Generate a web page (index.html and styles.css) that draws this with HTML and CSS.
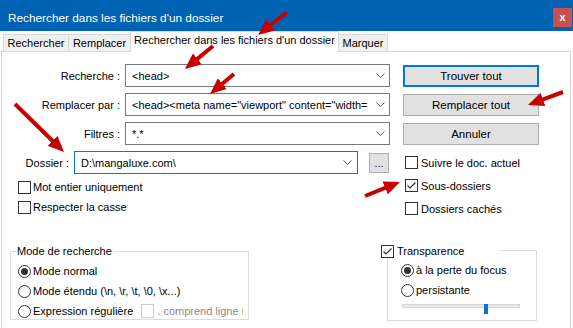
FILE: index.html
```html
<!DOCTYPE html>
<html lang="fr">
<head>
    <meta charset="UTF-8">
    <meta name="viewport" content="width=device-width, initial-scale=1.0">
    <title>Rechercher dans les fichiers d'un dossier</title>
    <link rel="stylesheet" href="styles.css">
</head>
<body>
    <div class="window">
        <div class="titlebar">
            <span class="title">Rechercher dans les fichiers d'un dossier</span>
            <span class="close">x</span>
        </div>

        <div class="tabs">
            <div class="tab tab-find">Rechercher</div>
            <div class="tab tab-replace">Remplacer</div>
            <div class="tab tab-files active">Rechercher dans les fichiers d'un dossier</div>
            <div class="tab tab-mark">Marquer</div>
        </div>

        <div class="panel">
            <div class="top">
                <div class="fields">
                    <div class="field">
                        <label>Recherche :</label>
                        <div class="combo">
                            <span class="value">&lt;head&gt;</span>
                            <svg class="chevron" width="9" height="5" viewBox="0 0 9 5"><polyline points="0.5,0.5 4.5,4.5 8.5,0.5" /></svg>
                        </div>
                    </div>
                    <div class="field">
                        <label>Remplacer par :</label>
                        <div class="combo">
                            <span class="value">&lt;head&gt;&lt;meta name="viewport" content="width=</span>
                            <svg class="chevron" width="9" height="5" viewBox="0 0 9 5"><polyline points="0.5,0.5 4.5,4.5 8.5,0.5" /></svg>
                        </div>
                    </div>
                    <div class="field">
                        <label>Filtres :</label>
                        <div class="combo">
                            <span class="value">*.*</span>
                            <svg class="chevron" width="9" height="5" viewBox="0 0 9 5"><polyline points="0.5,0.5 4.5,4.5 8.5,0.5" /></svg>
                        </div>
                    </div>
                    <div class="field field-folder">
                        <label>Dossier :</label>
                        <div class="combo focus">
                            <span class="value">D:\mangaluxe.com\</span>
                            <svg class="chevron" width="9" height="5" viewBox="0 0 9 5"><polyline points="0.5,0.5 4.5,4.5 8.5,0.5" /></svg>
                        </div>
                        <button class="browse">...</button>
                    </div>

                    <div class="checks left-checks">
                        <div class="check-row"><span class="box"></span><span>Mot entier uniquement</span></div>
                        <div class="check-row"><span class="box"></span><span>Respecter la casse</span></div>
                    </div>
                </div>

                <div class="actions">
                    <button class="btn default">Trouver tout</button>
                    <button class="btn">Remplacer tout</button>
                    <button class="btn">Annuler</button>

                    <div class="checks right-checks">
                        <div class="check-row"><span class="box"></span><span>Suivre le doc. actuel</span></div>
                        <div class="check-row">
                            <span class="box checked"><svg width="11" height="11" viewBox="0 0 11 11"><polyline points="1.5,5.5 4,8 9.5,2.5" /></svg></span>
                            <span>Sous-dossiers</span>
                        </div>
                        <div class="check-row"><span class="box"></span><span>Dossiers cachés</span></div>
                    </div>
                </div>
            </div>

            <div class="bottom">
                <div class="group group-mode">
                    <div class="group-title">Mode de recherche</div>
                    <div class="radio-row"><span class="radio on"></span><span>Mode normal</span></div>
                    <div class="radio-row"><span class="radio"></span><span>Mode étendu (\n, \r, \t, \0, \x...)</span></div>
                    <div class="radio-row">
                        <span class="radio"></span><span>Expression régulière</span>
                        <span class="box disabled"></span><span class="muted">. comprend ligne n</span>
                    </div>
                </div>

                <div class="group group-transp">
                    <div class="group-title group-check">
                        <span class="box checked"><svg width="11" height="11" viewBox="0 0 11 11"><polyline points="1.5,5.5 4,8 9.5,2.5" /></svg></span>
                        <span>Transparence</span>
                    </div>
                    <div class="radio-row"><span class="radio on"></span><span>à la perte du focus</span></div>
                    <div class="radio-row"><span class="radio"></span><span>persistante</span></div>
                    <div class="slider">
                        <div class="track"></div>
                        <div class="thumb"></div>
                    </div>
                </div>
            </div>
        </div>

        <!-- red annotation arrows drawn over the screenshot -->
        <svg class="arrows" width="573" height="328" viewBox="0 0 573 328">
            <defs>
                <marker id="head" markerWidth="4.5" markerHeight="3.5" refX="0.5" refY="1.75" orient="auto">
                    <path d="M0,0 L4,1.75 L0,3.5 z" fill="#c80000" />
                </marker>
            </defs>
            <line x1="287" y1="12" x2="269" y2="26.3" marker-end="url(#head)" />
            <line x1="213" y1="46" x2="195.8" y2="60.1" marker-end="url(#head)" />
            <line x1="234" y1="74" x2="220.8" y2="85" marker-end="url(#head)" />
            <line x1="15" y1="104" x2="54" y2="142.2" marker-end="url(#head)" />
            <line x1="563" y1="92" x2="541.1" y2="100.1" marker-end="url(#head)" />
            <line x1="365" y1="196" x2="387" y2="187.2" marker-end="url(#head)" />
        </svg>
    </div>
</body>
</html>
```

FILE: styles.css
```css
:root {
    --title-blue: #0063b1;
    --focus-blue: #0078d7;
    --tab-border: #d9d9d9;
    --control-border: #7a7a7a;
    --button-face: #e1e1e1;
    --button-border: #adadad;
    --mark: #333333;
}

* {
    margin: 0;
    padding: 0;
    box-sizing: border-box;
}

body {
    background-color: #ffffff;
    color: #000000;
    font-family: "Liberation Sans", Arial, sans-serif;
    font-size: 11px;
}

.window {
    position: relative;
    width: 573px;
    height: 328px;
    overflow: hidden;
    background-color: #ffffff;
}

/* title bar */
.titlebar {
    height: 31px;
    background-color: var(--title-blue);
    color: #ffffff;
    font-size: 11.8px;
    display: flex;
    justify-content: space-between;
    align-items: center;
    padding: 4px 1px 0 8px;
}

.close {
    align-self: flex-start;
    margin-top: 4px;
    width: 19px;
    height: 19px;
    background-color: #c75050;
    color: #ffffff;
    font-weight: bold;
    font-size: 11px;
    line-height: 18px;
    text-align: center;
}

/* tabs */
.tabs {
    display: flex;
    align-items: flex-end;
    height: 20px;
    padding-left: 3px;
}

.tab {
    height: 17px;
    border: 1px solid var(--tab-border);
    border-bottom: none;
    background-color: #f0f0f0;
    line-height: 17px;
    text-align: center;
    white-space: nowrap;
}

.tab + .tab {
    margin-left: -1px;
}

.tab-find { width: 66px; }
.tab-replace { width: 63px; }
.tab-files { width: 209px; }
.tab-mark { width: 50px; }

.tab.active {
    position: relative;
    z-index: 1;
    height: 21px;
    margin-bottom: -1px;
    background-color: #ffffff;
    line-height: 16px;
}

.panel {
    margin-left: 1px;
    width: 570px;
    height: 300px;
    border: 1px solid var(--tab-border);
}

/* top part: fields + action buttons */
.top {
    display: flex;
}

.fields {
    width: 388px;
    padding-top: 12px;
}

.field {
    display: flex;
    justify-content: flex-end;
    align-items: center;
    height: 23px;
    margin-bottom: 6px;
    white-space: nowrap;
}

.field label {
    margin-right: 5px;
}

.combo {
    display: flex;
    align-items: center;
    width: 265px;
    height: 23px;
    padding: 0 4px 0 6px;
    border: 1px solid var(--control-border);
    background-color: #ffffff;
}

.combo.focus {
    border-color: var(--focus-blue);
}

.combo .value {
    flex: 1;
    overflow: hidden;
    white-space: nowrap;
    margin-right: 3px;
}

.chevron {
    flex-shrink: 0;
}

.chevron polyline {
    fill: none;
    stroke: #555555;
    stroke-width: 1;
}

.field-folder .combo {
    width: 284px;
    padding-right: 5px;
}

.browse {
    width: 20px;
    height: 20px;
    margin: 0 1px 0 11px;
    border: 1px solid var(--button-border);
    background-color: var(--button-face);
    font-family: inherit;
    font-size: 11px;
    line-height: 14px;
    color: #1a1a40;
}

.checks {
    display: flex;
    flex-direction: column;
    white-space: nowrap;
}

.check-row {
    display: flex;
    align-items: center;
    height: 20px;
}

.left-checks {
    margin-top: -3px;
    padding-left: 16px;
}

.box {
    flex-shrink: 0;
    display: flex;
    align-items: center;
    justify-content: center;
    width: 13px;
    height: 13px;
    margin-right: 2px;
    border: 1px solid var(--mark);
    background-color: #ffffff;
}

.box svg polyline {
    fill: none;
    stroke: var(--mark);
    stroke-width: 1.2;
}

.box.disabled {
    width: 13px;
    height: 14px;
    margin: 0 3px 0 8px;
    border-color: #cccccc;
}

.muted {
    color: #8a8a8a;
    width: 86px;
    overflow: hidden;
    white-space: nowrap;
}

.actions {
    width: 136px;
    margin-left: 13px;
    padding-top: 13px;
    display: flex;
    flex-direction: column;
}

.btn {
    height: 22px;
    margin-bottom: 7px;
    border: 1px solid var(--button-border);
    background-color: var(--button-face);
    font-family: inherit;
    font-size: 11.5px;
    color: #000000;
    white-space: nowrap;
}

.btn.default {
    border: 2px solid var(--focus-blue);
}

.right-checks {
    margin-top: -1px;
    padding-left: 2px;
}

.right-checks .check-row {
    height: 23px;
}

.right-checks .box {
    margin-right: 3px;
}

/* bottom part: option groups */
.bottom {
    display: flex;
    align-items: flex-start;
    margin-top: 30px;
}

.group {
    position: relative;
    border: 1px solid #dcdcdc;
}

.group-title {
    position: absolute;
    display: flex;
    align-items: center;
    height: 14px;
    background-color: #ffffff;
    white-space: nowrap;
}

.group-mode {
    width: 239px;
    height: 69px;
    margin: 1px 0 0 8px;
    padding: 9px 0 0 7px;
}

.group-mode .group-title {
    top: -8px;
    left: 5px;
    padding: 0 2px 0 1px;
}

.group-transp {
    width: 150px;
    height: 71px;
    margin-left: 138px;
    padding: 9px 0 0 13px;
}

.group-transp .group-title {
    top: -7px;
    left: -7px;
    width: 119px;
}

.group-check .box {
    margin-right: 3px;
}

.radio-row {
    display: flex;
    align-items: center;
    height: 20px;
    white-space: nowrap;
}

.radio {
    flex-shrink: 0;
    display: flex;
    align-items: center;
    justify-content: center;
    width: 13px;
    height: 13px;
    margin-right: 2px;
    border: 1px solid var(--mark);
    border-radius: 50%;
    background-color: #ffffff;
}

.radio.on::after {
    content: "";
    width: 7px;
    height: 7px;
    border-radius: 50%;
    background-color: var(--mark);
}

.slider {
    position: relative;
    width: 118px;
    height: 10px;
    margin: 1px 0 0 1px;
}

.track {
    margin-top: 4px;
    height: 4px;
    background-color: #e7eaea;
    border: 1px solid #d6d6d6;
}

.thumb {
    position: absolute;
    top: 0;
    left: 82px;
    width: 4px;
    height: 10px;
    background-color: var(--focus-blue);
}

/* annotation overlay */
.arrows {
    position: absolute;
    top: 0;
    left: 0;
    z-index: 10;
    pointer-events: none;
}

.arrows line {
    stroke: #c80000;
    stroke-width: 4;
}
```
